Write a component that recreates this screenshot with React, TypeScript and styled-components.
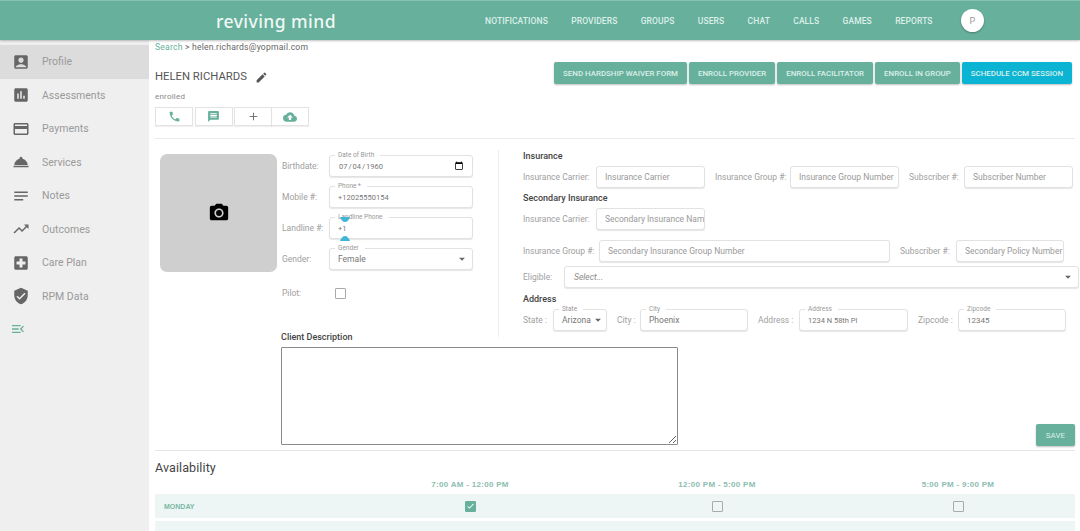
import React from 'react';
import styled, { createGlobalStyle } from 'styled-components';
import {
  MdAccountBox, MdAssessment, MdCreditCard, MdRoomService, MdNotes, MdTrendingUp,
  MdLocalHospital, MdVerifiedUser, MdMenuOpen, MdPhone, MdMessage, MdAdd,
  MdCloudUpload, MdEdit, MdPhotoCamera, MdArrowDropDown, MdCheck,
} from 'react-icons/md';

const GREEN = '#66b09c';
const FONT = '"Roboto", "Liberation Sans", sans-serif';

const GlobalStyle = createGlobalStyle`
  html, body { margin: 0; padding: 0; background: #fff; }
  body { font-family: ${FONT}; width: 1080px; height: 531px; overflow: hidden; }
  * { box-sizing: border-box; }
`;

// --- Top bar ---
const TopBar = styled.header`
  height: 40px; background: ${GREEN}; border-top: 1px solid #86c4b2;
  box-shadow: 0 1px 2px rgba(0,0,0,0.25); position: relative; z-index: 2;
  display: flex; align-items: center;
`;
const Logo = styled.div`
  margin-left: 216px; width: 269px;
  font-family: "Noto Sans", sans-serif; font-size: 17.5px; font-weight: 500; letter-spacing: 0.45px; color: #f1f8f5;
`;
const NavLink = styled.span`
  font-size: 8.5px; font-weight: 500; color: #dcefe9; margin-right: 23.3px; letter-spacing: 0.1px;
`;
const Avatar = styled.div`
  width: 23px; height: 23px; border-radius: 50%; background: #fff; margin-left: 5px;
  display: flex; align-items: center; justify-content: center;
  font-size: 9px; color: #999; box-shadow: 0 1px 2px rgba(0,0,0,0.3);
`;

// --- Shell ---
const Shell = styled.div`
  display: flex; height: 491px;
`;
const Sidebar = styled.nav`
  width: 149px; flex-shrink: 0; background: #efefef; padding-top: 5px;
`;
const SideItem = styled.div<{ $active?: boolean }>`
  height: 33.5px; display: flex; align-items: center; gap: 12px; padding-left: 12px;
  background: ${({ $active }) => ($active ? '#dcdcdc' : 'transparent')};
  color: #9a9a9a; font-size: 10.5px;
  svg { color: #666; flex-shrink: 0; }
`;
const Collapse = styled.div`
  padding: 8px 0 0 10px; color: #66b09c; line-height: 0;
`;
const Main = styled.main`
  flex: 1; padding: 2px 5px 0 6px; min-width: 0;
`;

// --- Header area ---
const Crumb = styled.div`
  font-size: 8.6px; line-height: 11px; color: #666; letter-spacing: 0.2px;
  span { color: #66b09c; }
`;
const HeadRow = styled.div`
  display: flex; justify-content: space-between; align-items: flex-start;
  border-bottom: 1px solid #e9e9e9; height: 86px;
`;
const NameLine = styled.div`
  margin-top: 16px; display: flex; align-items: center; gap: 8px;
  font-size: 11.3px; line-height: 16px; color: #555;
  svg { color: #555; }
`;
const Status = styled.div`
  margin-top: 7px; font-size: 8px; line-height: 10px; color: #888; letter-spacing: 0.2px;
`;
const IconGroup = styled.div`
  margin-top: 5px; display: flex; gap: 1.5px;
`;
const IconBtn = styled.div<{ $joined?: boolean }>`
  width: 38px; height: 19px; border: 1px solid #e3e3e3; display: flex; align-items: center; justify-content: center;
  margin-left: ${({ $joined }) => ($joined ? '-2.5px' : '0')}; color: ${GREEN};
  box-shadow: 0 1px 1px rgba(0,0,0,0.06);
`;
const Actions = styled.div`
  display: flex; gap: 2px; margin-top: 9px; margin-right: 3px;
`;
const ActionBtn = styled.div<{ $primary?: boolean }>`
  height: 22px; padding: 0 9px; border-radius: 2px; display: flex; align-items: center;
  background: ${({ $primary }) => ($primary ? '#0cb4d4' : GREEN)};
  color: #dcefe9; font-size: 7.9px; font-weight: 500; white-space: nowrap;
  box-shadow: 0 1px 2px rgba(0,0,0,0.25);
`;

// --- Form ---
const FormRow = styled.div`
  display: flex; padding-top: 11px; height: 198px;
`;
const LeftCol = styled.div`
  width: 344px; border-right: 1px solid #eee; display: flex; padding-left: 5px; padding-top: 4px;
`;
const Photo = styled.div`
  width: 117px; height: 118px; background: #cfcfcf; border-radius: 7px;
  display: flex; align-items: center; justify-content: center;
`;
const Fields = styled.div`
  margin-left: 5px; width: 191px; display: flex; flex-direction: column; gap: 9px; padding-top: 1px;
`;
const FieldRow = styled.div`
  display: flex; align-items: center; height: 22px;
`;
const RowLabel = styled.label<{ $w?: number; $ml?: number }>`
  font-size: 8.5px; color: #a0a0a0; white-space: nowrap; flex-shrink: 0;
  width: ${({ $w }) => ($w ? `${$w}px` : 'auto')};
  margin-left: ${({ $ml }) => $ml ?? 0}px;
`;
const Outlined = styled.div<{ $w?: number; $grow?: boolean }>`
  position: relative; height: 22px; border: 1px solid #e2e2e2; border-radius: 3px;
  box-shadow: 0 1px 1px rgba(0,0,0,0.1); display: flex; align-items: center; background: #fff;
  ${({ $w }) => ($w ? `width: ${$w}px; flex-shrink: 0;` : '')}
  ${({ $grow }) => ($grow ? 'flex: 1; min-width: 0;' : '')}
`;
const Legend = styled.span`
  position: absolute; top: -5px; left: 5px; padding: 0 6px 0 3px; background: #fff;
  font-size: 6.5px; line-height: 8px; color: #999; white-space: nowrap;
`;
const TextInput = styled.input<{ $size?: number }>`
  border: 0; outline: 0; background: transparent; width: 100%; height: 100%; min-width: 0;
  padding: 0 0 0 8px; font-family: ${FONT}; font-size: ${({ $size }) => $size ?? 8.5}px; color: #777;
  &::placeholder { color: #999; opacity: 1; }
  &::-webkit-calendar-picker-indicator { width: 10px; height: 10px; margin: 0 8px 0 0; padding: 0; }
`;
const Value = styled.span`
  padding-left: 8px; flex: 1; font-size: 8.5px; color: #777;
`;
const Italic = styled(Value)`
  font-style: italic; color: #888; padding-left: 9px;
`;
const Caret = styled(MdArrowDropDown)`
  color: #666; flex-shrink: 0; margin-right: 3px;
`;
const Handle = styled.svg<{ $bottom?: boolean }>`
  position: absolute; left: 10px; ${({ $bottom }) => ($bottom ? 'bottom: -3px;' : 'top: -1px;')}
`;
const PilotRow = styled.div`
  display: flex; align-items: center; height: 22px; margin-top: 3px;
`;
const Box = styled.span<{ $checked?: boolean }>`
  width: 11px; height: 11px; border-radius: 1px; display: inline-flex; align-items: center; justify-content: center;
  border: 1px solid ${({ $checked }) => ($checked ? GREEN : '#aaa')};
  background: ${({ $checked }) => ($checked ? GREEN : 'transparent')}; color: #fff;
`;

const RightCol = styled.div`
  flex: 1; padding-left: 24px; min-width: 0; display: flex; flex-direction: column; margin-top: 1px;
`;
const SectionTitle = styled.div<{ $top?: number }>`
  font-size: 9px; line-height: 11px; color: #444; font-weight: 500; margin-top: ${({ $top }) => $top ?? 0}px;
`;
const InsRow = styled.div<{ $top?: number }>`
  display: flex; align-items: center; gap: 6px; height: 22px; margin-top: ${({ $top }) => $top ?? 0}px;
`;

// --- Description ---
const DescRow = styled.div`
  display: flex; justify-content: space-between; align-items: flex-end;
  padding: 0 0 5px 126px; height: 116px; border-bottom: 1px solid #e6e6e6; margin-top: -2px;
`;
const DescLabel = styled.div`
  font-size: 9px; line-height: 11px; color: #444; font-weight: 500; margin-bottom: 4px;
`;
const DescArea = styled.textarea`
  display: block; width: 397px; height: 98px; border: 1px solid #8a8a8a; border-radius: 1px; margin: 0; outline: 0;
`;
const SaveBtn = styled.div`
  width: 39px; height: 22px; background: ${GREEN}; color: #dcefe9; border-radius: 2px; margin-bottom: -1px;
  font-size: 8px; display: flex; align-items: center; justify-content: center;
  box-shadow: 0 1px 2px rgba(0,0,0,0.25);
`;

// --- Availability ---
const AvailTitle = styled.div`
  margin-top: 9px; font-size: 12.5px; line-height: 15px; color: #444; letter-spacing: 0.1px;
`;
const Grid = styled.div`
  display: grid; grid-template-columns: 192px 246px 248px 234px; align-items: center;
`;
const SlotHead = styled.div`
  text-align: center; font-family: "Liberation Sans", sans-serif; font-size: 8px; font-weight: 700;
  color: #8dbdb0; letter-spacing: 0.3px; line-height: 11px; padding-top: 4px;
`;
const DayRow = styled(Grid)`
  height: 24px; background: #eef6f5; margin-top: 4px;
`;
const NextRow = styled.div`
  height: 10px; background: #eef6f5; margin-top: 3px;
`;
const DayName = styled.div`
  padding-left: 9px; font-family: "Liberation Sans", sans-serif; font-size: 7px; font-weight: 700; color: #7ab8a6;
`;
const Cell = styled.div`
  display: flex; justify-content: center;
`;

const sideItems = [
  { label: 'Profile', Icon: MdAccountBox, active: true },
  { label: 'Assessments', Icon: MdAssessment },
  { label: 'Payments', Icon: MdCreditCard },
  { label: 'Services', Icon: MdRoomService },
  { label: 'Notes', Icon: MdNotes },
  { label: 'Outcomes', Icon: MdTrendingUp },
  { label: 'Care Plan', Icon: MdLocalHospital },
  { label: 'RPM Data', Icon: MdVerifiedUser },
];
const navLinks = ['NOTIFICATIONS', 'PROVIDERS', 'GROUPS', 'USERS', 'CHAT', 'CALLS', 'GAMES', 'REPORTS'];

const Drop = () => (
  <path d="M0 5 C1 2 3 0 5 0 C7 0 9 2 10 5 Z" fill="#3fb6d6" />
);

const App = () => (
  <>
    <GlobalStyle />
    <TopBar>
      <Logo>reviving mind</Logo>
      {navLinks.map(link => <NavLink key={link}>{link}</NavLink>)}
      <Avatar>P</Avatar>
    </TopBar>
    <Shell>
      <Sidebar>
        {sideItems.map(({ label, Icon, active }) => (
          <SideItem key={label} $active={active}><Icon size={18} />{label}</SideItem>
        ))}
        <Collapse><MdMenuOpen size={16} /></Collapse>
      </Sidebar>
      <Main>
        <Crumb><span>Search</span> &gt; helen.richards@yopmail.com</Crumb>
        <HeadRow>
          <div>
            <NameLine>HELEN RICHARDS <MdEdit size={13} /></NameLine>
            <Status>enrolled</Status>
            <IconGroup>
              <IconBtn><MdPhone size={13} /></IconBtn>
              <IconBtn><MdMessage size={13} /></IconBtn>
              <IconBtn><MdAdd size={13} color="#777" /></IconBtn>
              <IconBtn $joined><MdCloudUpload size={14} /></IconBtn>
            </IconGroup>
          </div>
          <Actions>
            <ActionBtn>SEND HARDSHIP WAIVER FORM</ActionBtn>
            <ActionBtn>ENROLL PROVIDER</ActionBtn>
            <ActionBtn>ENROLL FACILITATOR</ActionBtn>
            <ActionBtn>ENROLL IN GROUP</ActionBtn>
            <ActionBtn $primary>SCHEDULE CCM SESSION</ActionBtn>
          </Actions>
        </HeadRow>

        <FormRow>
          <LeftCol>
            <Photo><MdPhotoCamera size={22} color="#000" /></Photo>
            <Fields>
              <FieldRow>
                <RowLabel $w={47}>Birthdate:</RowLabel>
                <Outlined $grow>
                  <Legend>Date of Birth</Legend>
                  <TextInput type="date" defaultValue="1960-07-04" $size={7.5} />
                </Outlined>
              </FieldRow>
              <FieldRow>
                <RowLabel $w={47}>Mobile #:</RowLabel>
                <Outlined $grow>
                  <Legend>Phone *</Legend>
                  <TextInput defaultValue="+12025550154" $size={7.5} />
                </Outlined>
              </FieldRow>
              <FieldRow>
                <RowLabel $w={47}>Landline #:</RowLabel>
                <Outlined $grow>
                  <Legend>Landline Phone</Legend>
                  <TextInput defaultValue="+1" $size={7.5} />
                  <Handle width="10" height="5" viewBox="0 0 10 5" style={{ transform: 'scaleY(-1)' }}><Drop /></Handle>
                  <Handle $bottom width="10" height="5" viewBox="0 0 10 5"><Drop /></Handle>
                </Outlined>
              </FieldRow>
              <FieldRow>
                <RowLabel $w={47}>Gender:</RowLabel>
                <Outlined $grow>
                  <Legend>Gender</Legend>
                  <Value>Female</Value>
                  <Caret size={14} />
                </Outlined>
              </FieldRow>
              <PilotRow>
                <RowLabel $w={53}>Pilot:</RowLabel>
                <Box />
              </PilotRow>
            </Fields>
          </LeftCol>
          <RightCol>
            <SectionTitle>Insurance</SectionTitle>
            <InsRow $top={4}>
              <RowLabel $w={67}>Insurance Carrier:</RowLabel>
              <Outlined $w={109}><TextInput placeholder="Insurance Carrier" /></Outlined>
              <RowLabel $w={69} $ml={4}>Insurance Group #:</RowLabel>
              <Outlined $w={109}><TextInput placeholder="Insurance Group Number" /></Outlined>
              <RowLabel $w={49} $ml={4}>Subscriber #:</RowLabel>
              <Outlined $w={109}><TextInput placeholder="Subscriber Number" /></Outlined>
            </InsRow>
            <SectionTitle $top={5}>Secondary Insurance</SectionTitle>
            <InsRow $top={4}>
              <RowLabel $w={67}>Insurance Carrier:</RowLabel>
              <Outlined $w={109}><TextInput placeholder="Secondary Insurance Name" /></Outlined>
            </InsRow>
            <InsRow $top={10}>
              <RowLabel $w={70}>Insurance Group #:</RowLabel>
              <Outlined $w={291}><TextInput placeholder="Secondary Insurance Group Number" /></Outlined>
              <RowLabel $w={50} $ml={4}>Subscriber #:</RowLabel>
              <Outlined $w={108}><TextInput placeholder="Secondary Policy Number" /></Outlined>
            </InsRow>
            <InsRow $top={4}>
              <RowLabel $w={35}>Eligible:</RowLabel>
              <Outlined $w={515}><Italic>Select...</Italic><Caret size={14} /></Outlined>
            </InsRow>
            <SectionTitle $top={6}>Address</SectionTitle>
            <InsRow $top={4}>
              <RowLabel $w={24}>State :</RowLabel>
              <Outlined $w={54}><Legend>State</Legend><Value>Arizona</Value><Caret size={14} /></Outlined>
              <RowLabel $w={17} $ml={4}>City :</RowLabel>
              <Outlined $w={108}><Legend>City</Legend><TextInput defaultValue="Phoenix" /></Outlined>
              <RowLabel $w={35} $ml={4}>Address :</RowLabel>
              <Outlined $w={109}><Legend>Address</Legend><TextInput defaultValue="1234 N 58th Pl" $size={7.5} /></Outlined>
              <RowLabel $w={34} $ml={4}>Zipcode :</RowLabel>
              <Outlined $w={108}><Legend>Zipcode</Legend><TextInput defaultValue="12345" $size={8} /></Outlined>
            </InsRow>
          </RightCol>
        </FormRow>

        <DescRow>
          <div>
            <DescLabel>Client Description</DescLabel>
            <DescArea />
          </div>
          <SaveBtn>SAVE</SaveBtn>
        </DescRow>

        <AvailTitle>Availability</AvailTitle>
        <Grid>
          <div />
          <SlotHead>7:00 AM - 12:00 PM</SlotHead>
          <SlotHead>12:00 PM - 5:00 PM</SlotHead>
          <SlotHead>5:00 PM - 9:00 PM</SlotHead>
        </Grid>
        <DayRow>
          <DayName>MONDAY</DayName>
          <Cell><Box $checked><MdCheck size={10} /></Box></Cell>
          <Cell><Box /></Cell>
          <Cell><Box /></Cell>
        </DayRow>
        <NextRow />
      </Main>
    </Shell>
  </>
);

export default App;
